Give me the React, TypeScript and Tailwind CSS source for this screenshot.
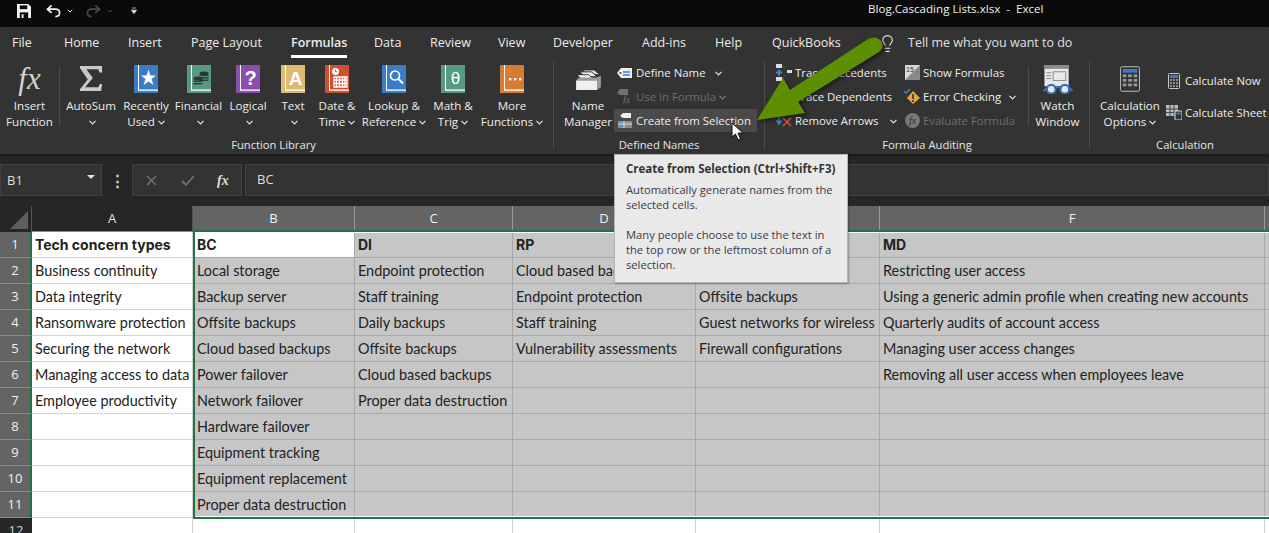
import React from 'react';
import { ChevronDown, Lightbulb } from 'lucide-react';

const uiFont = "font-['Open_Sans','Noto_Sans',sans-serif]";

// little ribbon chevron
const Chev = ({ dim }: { dim?: boolean }) => (
  <svg width="7" height="5" viewBox="0 0 7 5" className={`inline-block ml-[3px] mb-[1px] ${dim ? 'opacity-40' : ''}`}>
    <path d="M0.5 0.8 L3.5 3.8 L6.5 0.8" fill="none" stroke="#e6e6e6" strokeWidth="1.2" />
  </svg>
);

const BookIcon = ({ color, children }: { color: string; children?: React.ReactNode }) => (
  <svg width="24" height="28" viewBox="0 0 24 28">
    <rect width="24" height="28" fill={color} />
    <rect x="4" y="0" width="1" height="25" fill="#fff" />
    <rect x="4" y="24.5" width="20" height="1.3" fill="#fff" />
    {children}
  </svg>
);

const icons: Record<string, React.ReactNode> = {
  fx: <span className="font-['Liberation_Serif',serif] italic text-[31px] leading-[28px] text-[#d4d4d4]">fx</span>,
  sum: (
    <svg width="24" height="26" viewBox="0 0 26 28">
      <path d="M1 0 H25 V7 H22 L21 3.5 H8 L15 13 L6.5 23 H21 L22.5 19.5 H25 L24 27 H1 V25 L9.5 14.5 L1 2 Z" fill="#c9c9c9" />
    </svg>
  ),
  recent: (
    <BookIcon color="#3a7cc7">
      <path d="M14.5 4.5 L16.5 10.5 H22 L17.5 14 L19.5 20 L14.5 16.5 L9.5 20 L11.5 14 L7 10.5 H12.5 Z" fill="#fff" />
    </BookIcon>
  ),
  financial: (
    <BookIcon color="#569a85">
      <g fill="#333">
        <ellipse cx="17" cy="8.5" rx="4.5" ry="2" />
        <rect x="12.5" y="9.5" width="9" height="1.4" />
        <rect x="12.5" y="12" width="9" height="1.4" />
        <rect x="12.5" y="14.5" width="9" height="1.4" />
        <ellipse cx="11" cy="13.5" rx="4.5" ry="2" />
        <rect x="6.5" y="15.5" width="9" height="1.4" />
        <rect x="6.5" y="18" width="9" height="1.4" />
      </g>
    </BookIcon>
  ),
  logical: (
    <BookIcon color="#8a4db0">
      <text x="14.5" y="20" textAnchor="middle" fontSize="20" fontWeight="700" fill="#fff" fontFamily="Liberation Sans, sans-serif">?</text>
    </BookIcon>
  ),
  text: (
    <BookIcon color="#e0b970">
      <text x="14.5" y="20" textAnchor="middle" fontSize="19" fontWeight="700" fill="#fff" fontFamily="Liberation Sans, sans-serif">A</text>
    </BookIcon>
  ),
  date: (
    <BookIcon color="#cf5130">
      <circle cx="10.5" cy="6.5" r="3.5" fill="#fff" />
      <path d="M10.5 4.5 V6.8 H12.5" stroke="#cf5130" strokeWidth="0.9" fill="none" />
      <path d="M9 12 H22 V22 H9 Z M11.5 12 V22 M14.5 12 V22 M17.5 12 V22 M20 12 V22 M9 15 H22 M9 18.5 H22" fill="none" stroke="#fff" strokeWidth="1.3" />
    </BookIcon>
  ),
  lookup: (
    <BookIcon color="#3a7cc7">
      <circle cx="13" cy="10.5" r="4.5" fill="none" stroke="#fff" strokeWidth="1.7" />
      <path d="M16.5 14 L21 18.5" stroke="#fff" strokeWidth="2" />
    </BookIcon>
  ),
  math: (
    <BookIcon color="#569a85">
      <text x="14.5" y="19" textAnchor="middle" fontSize="17" fill="#fff" fontFamily="Liberation Sans, sans-serif">θ</text>
    </BookIcon>
  ),
  more: (
    <BookIcon color="#d87c32">
      <rect x="9" y="13" width="2.4" height="2.4" fill="#fff" />
      <rect x="14" y="13" width="2.4" height="2.4" fill="#fff" />
      <rect x="19" y="13" width="2.4" height="2.4" fill="#fff" />
    </BookIcon>
  ),
  nameManager: (
    <svg width="27" height="21" viewBox="0 0 28 22">
      <path d="M8 1 H20 L26 6 H13 Z" fill="#d8d8d8" stroke="#333" />
      <path d="M5 3 H17 L23 8 H10 Z" fill="#efefef" stroke="#333" />
      <path d="M2 6 H14 L20 11 H7 Z" fill="#f5f5f5" stroke="#333" />
      <path d="M4 9 H22 L27 7 V19 L23 22 V12 H1 Z" fill="#9a9a9a" />
      <rect x="1" y="12" width="22" height="10" fill="#efefef" />
    </svg>
  ),
  watch: (
    <svg width="30" height="29" viewBox="0 0 30 30">
      <rect x="1" y="0" width="25" height="22" fill="#e9e9e9" />
      <rect x="1" y="0" width="25" height="4" fill="#8a8a8a" />
      <rect x="10" y="7" width="13" height="9" fill="none" stroke="#8a8a8a" />
      <path d="M3 8 H8 M3 11 H8 M3 14 H8" stroke="#8a8a8a" />
      <circle cx="8" cy="25" r="4.5" fill="#e9e9e9" stroke="#2f73c4" strokeWidth="2.2" />
      <circle cx="22" cy="25" r="4.5" fill="#e9e9e9" stroke="#2f73c4" strokeWidth="2.2" />
      <path d="M11 23 H19 M3 24 L0 27 M27 24 L30 27" stroke="#2f73c4" strokeWidth="2" />
    </svg>
  ),
  calcOptions: (
    <svg width="20" height="28" viewBox="0 0 22 28">
      <rect x="0.5" y="0.5" width="21" height="27" rx="2" fill="#333" stroke="#c9c9c9" />
      <rect x="3" y="3" width="16" height="4" fill="#3a7cc7" />
      <g fill="#9a9a9a">
        <rect x="3" y="9" width="4" height="3" /><rect x="9" y="9" width="4" height="3" /><rect x="15" y="9" width="4" height="3" />
        <rect x="3" y="14" width="4" height="3" /><rect x="9" y="14" width="4" height="3" /><rect x="15" y="14" width="4" height="3" />
        <rect x="3" y="19" width="4" height="3" /><rect x="9" y="19" width="4" height="3" /><rect x="15" y="19" width="4" height="3" />
      </g>
    </svg>
  ),
};

const BigButton = ({ w, icon, l1, l2, caret = true }: { w: string; icon: string; l1: string; l2?: string; caret?: boolean }) => (
  <div className={`${w} shrink-0 flex flex-col items-center pt-[5px] text-[11.6px] leading-4 text-[#ececec] whitespace-nowrap`}>
    <div className="h-[28px] flex items-center justify-center">{icons[icon]}</div>
    <div className="mt-[5px]">{l1}</div>
    <div>
      {l2}
      {caret ? <Chev /> : null}
    </div>
  </div>
);

const SmallIcon = ({ name }: { name: string }) => {
  switch (name) {
    case 'tag':
      return (
        <svg width="16" height="12" viewBox="0 0 16 12">
          <path d="M0 6 L4 1 H15 V11 H4 Z" fill="#eee" />
          <path d="M6 5 H13 M6 8 H13" stroke="#3a7cc7" strokeWidth="1.3" />
          <circle cx="3.5" cy="6" r="1" fill="#333" />
        </svg>
      );
    case 'use':
      return (
        <svg width="16" height="15" viewBox="0 0 16 15" opacity="0.45">
          <path d="M0 4 L3 0 H11 V6 H3 Z" fill="#bbb" />
          <text x="6" y="14" fontSize="10" fontStyle="italic" fill="#bbb" fontFamily="Liberation Serif, serif">fx</text>
        </svg>
      );
    case 'create':
      return (
        <svg width="16" height="15" viewBox="0 0 16 15">
          <path d="M3 3 L6 0 H14 V5 H6 Z" fill="#eee" />
          <rect x="1" y="8" width="14" height="7" fill="#8c8c8c" />
          <rect x="1" y="8" width="6" height="7" fill="#6f93b8" />
          <path d="M1 11 H15 M7 8 V15" stroke="#ddd" />
        </svg>
      );
    case 'prec':
      return (
        <svg width="16" height="17" viewBox="0 0 16 17">
          <rect x="0" y="0" width="6" height="4" fill="#ddd" />
          <rect x="11" y="6" width="5" height="3" fill="#ddd" />
          <rect x="0" y="13" width="6" height="4" fill="#ddd" />
          <path d="M0 8.5 H6 M3 5.5 V11.5" stroke="#3a8ad8" strokeWidth="2" />
          <path d="M7 2 L10 5 M7 14 L10 11" stroke="#3a8ad8" strokeWidth="1" strokeDasharray="1 1" />
        </svg>
      );
    case 'dep':
      return (
        <svg width="16" height="15" viewBox="0 0 16 15">
          <rect x="0" y="0" width="5" height="3" fill="#ddd" />
        </svg>
      );
    case 'remove':
      return (
        <svg width="16" height="13" viewBox="0 0 16 13">
          <path d="M3 0 V9 M0.5 6.5 L3 10 L5.5 6.5" stroke="#3a8ad8" strokeWidth="1.4" fill="none" />
          <path d="M7 4 L15 12 M15 4 L7 12" stroke="#d9512c" strokeWidth="1.6" />
        </svg>
      );
    case 'show':
      return (
        <svg width="15" height="15" viewBox="0 0 15 15">
          <rect width="15" height="15" fill="#d8d8d8" />
          <path d="M0 15 L15 0 V15 Z" fill="#888" />
          <text x="1" y="7" fontSize="7" fill="#333" fontFamily="Liberation Sans, sans-serif">15</text>
        </svg>
      );
    case 'err':
      return (
        <svg width="16" height="15" viewBox="0 0 16 15">
          <path d="M0 2 L2 4 L6 0" stroke="#3a8ad8" strokeWidth="1.3" fill="none" />
          <path d="M9 2 L16 9 L9 15 L3 9 Z" fill="#e8a33d" />
          <path d="M9 5 V10 M9 11 V13" stroke="#333" strokeWidth="1.6" />
        </svg>
      );
    case 'eval':
      return (
        <svg width="15" height="15" viewBox="0 0 15 15">
          <circle cx="7.5" cy="7.5" r="7.5" fill="#777" />
          <text x="7.5" y="11" textAnchor="middle" fontSize="10" fontStyle="italic" fill="#333" fontFamily="Liberation Serif, serif">fx</text>
        </svg>
      );
    case 'calcNow':
      return (
        <svg width="12" height="16" viewBox="0 0 12 16">
          <rect x="0.5" y="0.5" width="11" height="15" rx="1" fill="#333" stroke="#c9c9c9" />
          <rect x="2" y="2" width="8" height="3" fill="#3a7cc7" />
          <path d="M2 7 H10 M2 10 H10 M2 13 H10" stroke="#aaa" strokeWidth="1.5" strokeDasharray="2 1" />
        </svg>
      );
    default:
      return (
        <svg width="16" height="15" viewBox="0 0 16 15">
          <rect width="12" height="11" fill="#bbb" />
          <path d="M0 4 H12 M0 7.5 H12 M4 0 V11 M8 0 V11" stroke="#444" />
          <rect x="9" y="6" width="7" height="9" rx="1" fill="#333" stroke="#ddd" />
          <rect x="10.5" y="7.5" width="4" height="2" fill="#3a7cc7" />
        </svg>
      );
  }
};

const SmallButton = ({ icon, label, chevGap, dim, active }: { icon: string; label: string; chevGap?: string; dim?: boolean; active?: boolean }) => (
  <div className={`h-[23px] flex items-center pl-[3px] whitespace-nowrap text-[11.4px] ${dim ? 'text-[#6f6f6f]' : 'text-[#ececec]'} ${active ? 'bg-[#4a4a4a]' : ''}`}>
    <span className="w-[16px] flex justify-center shrink-0">
      <SmallIcon name={icon} />
    </span>
    <span className="ml-[3px]">{label}</span>
    {chevGap ? (
      <span className={chevGap}>
        <Chev dim={dim} />
      </span>
    ) : null}
  </div>
);

const Group = ({ w, label, labelClass, children, noSep }: { w: string; label: string; labelClass?: string; children: React.ReactNode; noSep?: boolean }) => (
  <div className={`${w} shrink-0 flex h-full`}>
    <div className="flex-1 min-w-0 flex flex-col">
      <div className="flex-1 flex min-h-0">{children}</div>
      <div className={`h-[20px] pt-[3px] text-center text-[11.2px] leading-[16px] text-[#e6e6e6] whitespace-nowrap ${labelClass ?? ''}`}>{label}</div>
    </div>
    {noSep ? null : <div className="w-px mt-px mb-[5px] bg-[#4d4d4d]" />}
  </div>
);

const tabs: [string, string][] = [
  ['File', 'w-[64px] pl-[12px]'],
  ['Home', 'w-[64px]'],
  ['Insert', 'w-[63px]'],
  ['Page Layout', 'w-[100px]'],
  ['Formulas', 'w-[83px] font-semibold'],
  ['Data', 'w-[56px]'],
  ['Review', 'w-[68px]'],
  ['View', 'w-[55px]'],
  ['Developer', 'w-[89px]'],
  ['Add-ins', 'w-[73px]'],
  ['Help', 'w-[57px]'],
  ['QuickBooks', 'w-[107px]'],
];

const columns = ['A', 'B', 'C', 'D', 'E', 'F'];

const rows: string[][] = [
  ['Tech concern types', 'BC', 'DI', 'RP', '', 'MD'],
  ['Business continuity', 'Local storage', 'Endpoint protection', 'Cloud based backups', '', 'Restricting user access'],
  ['Data integrity', 'Backup server', 'Staff training', 'Endpoint protection', 'Offsite backups', 'Using a generic admin profile when creating new accounts'],
  ['Ransomware protection', 'Offsite backups', 'Daily backups', 'Staff training', 'Guest networks for wireless', 'Quarterly audits of account access'],
  ['Securing the network', 'Cloud based backups', 'Offsite backups', 'Vulnerability assessments', 'Firewall configurations', 'Managing user access changes'],
  ['Managing access to data', 'Power failover', 'Cloud based backups', '', '', 'Removing all user access when employees leave'],
  ['Employee productivity', 'Network failover', 'Proper data destruction', '', '', ''],
  ['', 'Hardware failover', '', '', '', ''],
  ['', 'Equipment tracking', '', '', '', ''],
  ['', 'Equipment replacement', '', '', '', ''],
  ['', 'Proper data destruction', '', '', '', ''],
  ['', '', '', '', '', ''],
];

const gridCols = 'grid grid-cols-[32px_161px_162px_158px_183px_184px_385px_1fr]';

export default function App() {
  return (
    <div className={`w-[1269px] h-[533px] overflow-hidden relative bg-[#262626] ${uiFont}`}>
      {/* title bar */}
      <div className="h-[27px] bg-[#0a0a0a] flex items-center pb-[5px] relative">
        <div className="w-[17px] ml-[17px] flex">
          <svg width="14" height="14" viewBox="0 0 15 15">
            <path d="M0 0 H12 L15 3 V15 H0 Z" fill="#f2f2f2" />
            <rect x="3" y="1.5" width="8" height="4" fill="#0a0a0a" />
            <rect x="3" y="9" width="9" height="6" fill="#0a0a0a" />
            <rect x="5" y="11" width="2" height="4" fill="#f2f2f2" />
          </svg>
        </div>
        <svg width="15" height="14" viewBox="0 0 16 14" className="ml-[12px]">
          <path d="M6 1 L1.5 5 L6 9 M2 5 H10 Q14.5 5 14.5 9 Q14.5 12.5 10 13" fill="none" stroke="#f2f2f2" strokeWidth="1.8" />
        </svg>
        <ChevronDown size={8} strokeWidth={3} className="ml-[5px] text-[#e6e6e6]" />
        <svg width="15" height="14" viewBox="0 0 16 14" className="ml-[12px]">
          <path d="M10 1 L14.5 5 L10 9 M14 5 H6 Q1.5 5 1.5 9 Q1.5 12.5 6 13" fill="none" stroke="#4a4a4a" strokeWidth="1.8" />
        </svg>
        <ChevronDown size={8} strokeWidth={3} className="ml-[5px] text-[#4a4a4a]" />
        <svg width="6" height="8" viewBox="0 0 7 8" className="ml-[17px]">
          <path d="M1 0.5 H6 M0.5 3 H6.5 L3.5 7 Z" fill="#e6e6e6" stroke="#e6e6e6" strokeWidth="0.8" />
        </svg>
        <div className="ml-[731px] mb-[4px] text-[11.6px] text-[#f0f0f0] whitespace-pre">Blog.Cascading Lists.xlsx  -  Excel</div>
      </div>

      {/* ribbon */}
      <div className="h-[127px] bg-[#333333] flex flex-col shadow-[0_2px_3px_rgba(0,0,0,0.4)] relative">
        <div className="h-[33px] pb-[2px] flex items-center text-[12.5px] text-[#ececec] shrink-0 whitespace-nowrap pt-[2px]">
          {tabs.map(([t, c]) => (
            <div key={t} className={`${c} shrink-0 relative h-full flex items-center`}>
              <span className="relative">
                {t}
                {t === 'Formulas' ? <span className="absolute left-0 right-0 top-[21px] h-[3px] bg-white" /> : null}
              </span>
            </div>
          ))}
          <Lightbulb size={19} strokeWidth={1.4} className="text-[#e6e6e6] shrink-0 -ml-[1px]" />
          <div className="ml-[11px] text-[#e0e0e0]">Tell me what you want to do</div>
        </div>
        <div className="flex-1 flex min-h-0">
          <Group w="w-[554px]" label="Function Library" labelClass="pr-[6px]">
            <div className="w-[60px] shrink-0 flex">
              <BigButton w="w-[59px]" icon="fx" l1="Insert" l2="Function" caret={false} />
              <div className="w-px mt-[7px] mb-[8px] bg-[#4d4d4d]" />
            </div>
            <BigButton w="w-[62px]" icon="sum" l1="AutoSum" />
            <BigButton w="w-[48px]" icon="recent" l1="Recently" l2="Used" />
            <BigButton w="w-[57px]" icon="financial" l1="Financial" />
            <BigButton w="w-[42px]" icon="logical" l1="Logical" />
            <BigButton w="w-[48px]" icon="text" l1="Text" />
            <BigButton w="w-[40px]" icon="date" l1="Date &" l2="Time" />
            <BigButton w="w-[74px]" icon="lookup" l1="Lookup &" l2="Reference" />
            <BigButton w="w-[44px]" icon="math" l1="Math &" l2="Trig" />
            <BigButton w="w-[74px]" icon="more" l1="More" l2="Functions" />
          </Group>
          <Group w="w-[211px]" label="Defined Names">
            <BigButton w="w-[68px]" icon="nameManager" l1="Name" l2="Manager" caret={false} />
            <div className="w-[143px] -ml-[8px] pt-[1px] flex flex-col gap-[1px] shrink-0">
              <SmallButton icon="tag" label="Define Name" chevGap="ml-[6px]" />
              <SmallButton icon="use" label="Use in Formula" dim chevGap="ml-0" />
              <SmallButton icon="create" label="Create from Selection" active />
            </div>
          </Group>
          <Group w="w-[325px]" label="Formula Auditing">
            <div className="w-[136px] pl-[8px] pt-[1px] flex flex-col gap-[1px] shrink-0">
              <SmallButton icon="prec" label="Trace Precedents" />
              <SmallButton icon="dep" label="Trace Dependents" />
              <SmallButton icon="remove" label="Remove Arrows" chevGap="ml-[8px]" />
            </div>
            <div className="w-[127px] pt-[1px] flex flex-col gap-[1px] shrink-0">
              <SmallButton icon="show" label="Show Formulas" />
              <SmallButton icon="err" label="Error Checking" chevGap="ml-[5px]" />
              <SmallButton icon="eval" label="Evaluate Formula" dim />
            </div>
            <div className="w-px mt-[7px] mb-[8px] bg-[#4d4d4d]" />
            <BigButton w="w-[57px]" icon="watch" l1="Watch" l2="Window" caret={false} />
          </Group>
          <Group w="w-[190px]" label="Calculation" noSep>
            <BigButton w="w-[80px]" icon="calcOptions" l1="Calculation" l2="Options" />
            <div className="-ml-[7px] pt-[9px] flex flex-col gap-[9px] whitespace-nowrap">
              <SmallButton icon="calcNow" label="Calculate Now" />
              <SmallButton icon="sheet" label="Calculate Sheet" />
            </div>
          </Group>
        </div>
      </div>

      {/* formula bar */}
      <div className="h-[52px] pt-[10px] flex text-[13px] text-[#dedede] shrink-0">
        <div className="w-[102px] h-[32px] bg-[#333] border border-[#404040] flex items-center justify-between pl-[6px] pr-[6px]">
          <span className="pt-[2px]">B1</span>
          <span className="w-0 h-0 border-x-[4px] border-x-transparent border-t-[4px] border-t-[#e0e0e0] mb-[6px]" />
        </div>
        <div className="w-[30px] h-[32px] flex items-center justify-center font-bold text-[#ddd] text-[15px] leading-none">⋮</div>
        <div className="w-[110px] h-[32px] bg-[#333] border border-[#404040] flex items-center text-[#6f6f6f]">
          <svg width="11" height="11" viewBox="0 0 11 11" className="ml-[13px]">
            <path d="M1 1 L10 10 M10 1 L1 10" stroke="#6f6f6f" strokeWidth="1.6" />
          </svg>
          <svg width="14" height="11" viewBox="0 0 14 11" className="ml-[24px]">
            <path d="M1 6 L5 10 L13 1" stroke="#6f6f6f" strokeWidth="1.8" fill="none" />
          </svg>
          <span className="ml-[22px] font-['Liberation_Serif',serif] italic font-bold text-[14px] text-[#dedede]">fx</span>
        </div>
        <div className="flex-1 ml-[3px] h-[32px] bg-[#333] border border-[#404040] flex items-center pl-[11px]">BC</div>
      </div>

      {/* sheet */}
      <div className="font-['Lato','Open_Sans',sans-serif] text-[14.4px] text-[#222]">
        <div className={`${gridCols} h-[26px] text-[#e0e0e0] font-['Open_Sans',sans-serif] text-[13px]`}>
          <div className="bg-[#262626] relative border-r border-[#555] overflow-hidden">
            <span className="absolute right-[3px] bottom-[3px] w-0 h-0 border-l-[18px] border-l-transparent border-b-[18px] border-b-[#5e5e5e]" />
          </div>
          {columns.map((c) => (
            <div key={c} className={`flex items-center justify-center border-r ${c === 'A' ? 'bg-[#262626] border-[#555] border-b border-b-[#888]' : 'bg-[#646464] border-[#9a9a9a] text-[#f2f2f2]'}`}>
              {c}
            </div>
          ))}
          <div className="bg-[#646464]" />
        </div>
        {rows.map((r, i) => {
          const selected = i < 11;
          return (
            <div key={i} className={`${gridCols} h-[26px] bg-white`}>
              <div className={`flex items-center justify-center font-['Open_Sans',sans-serif] text-[13px] border-b ${selected ? 'bg-[#646464] text-[#f0f0f0] border-[#8a8a8a] border-r-2 border-r-[#217346]' : 'bg-[#262626] text-[#d0d0d0] border-[#555]'}`}>
                {i + 1}
              </div>
              {r.map((cell, j) => {
                const inSel = j >= 1 && selected;
                const anchor = i === 0 && j === 1;
                return (
                  <div
                    key={j}
                    className={`min-w-0 flex items-center whitespace-nowrap border-b border-r ${anchor ? 'bg-white' : inSel ? 'bg-[#c6c6c6]' : 'bg-white'} ${inSel ? 'border-[#a8a8a8]' : 'border-[#d4d4d4]'} ${i === 0 ? "font-['Inter',sans-serif] font-bold text-[14px]" : ''} ${j === 1 && selected ? 'pl-[4px]' : 'pl-[3px]'}`}
                  >
                    {cell}
                  </div>
                );
              })}
              <div className={`border-b ${selected ? 'bg-[#c6c6c6] border-[#a8a8a8]' : 'border-[#d4d4d4]'}`} />
            </div>
          );
        })}
      </div>

      {/* selection outline over the cells */}
      <div className="absolute left-[193px] top-[230px] w-[1080px] h-[289px] border-2 border-[#217346] shadow-[inset_0_1px_0_#fff,inset_0_-1px_0_#fff] pointer-events-none z-10" />

      {/* tooltip */}
      <div className="absolute left-[614px] top-[154px] w-[234px] h-[129px] bg-[#e9e9e9] border border-[#b5b5b5] shadow-[1px_1px_2px_rgba(0,0,0,0.3)] pl-[11px] pt-[6px] text-[11.2px] leading-[15px] text-[#3a3a4a] z-20 font-['Open_Sans',sans-serif] whitespace-nowrap">
        <div className="font-bold text-[11.5px] text-[#333] mb-[6px]">Create from Selection (Ctrl+Shift+F3)</div>
        <div>Automatically generate names from the<br />selected cells.</div>
        <div className="mt-[15px]">Many people choose to use the text in<br />the top row or the leftmost column of a<br />selection.</div>
      </div>

      {/* annotation arrow */}
      <svg className="absolute left-[740px] top-[30px] z-30 drop-shadow-[2px_2px_2px_rgba(0,0,0,0.5)]" width="160" height="100" viewBox="0 0 160 100">
        <path d="M17 90 L43 48 L50 60 L128 9 Q136 5 141 11 Q145 17 139 22 L58 72 L65 83 Z" fill="#5e8f00" />
      </svg>

      {/* mouse pointer */}
      <svg className="absolute left-[731px] top-[122px] z-30" width="13" height="19" viewBox="0 0 13 19">
        <path d="M1 1 V15 L4.5 12 L7 18 L9.5 17 L7 11 H12 Z" fill="#fff" stroke="#111" strokeWidth="1" />
      </svg>
    </div>
  );
}
